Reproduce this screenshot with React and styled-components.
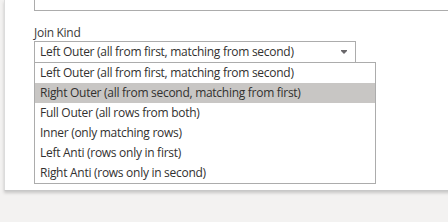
import styled, { createGlobalStyle } from 'styled-components';

const GlobalStyle = createGlobalStyle`
  html, body {
    margin: 0;
    padding: 0;
    background: #f3f2f1;
    width: 448px;
    height: 222px;
    overflow: hidden;
  }
  body {
    font-family: "Open Sans", "Noto Sans", sans-serif;
    color: #323130;
  }
`;

const Page = styled.div`
  width: 448px;
  height: 222px;
  padding-left: 4px;
  box-sizing: border-box;
  overflow: hidden;
`;

const Dialog = styled.div`
  position: relative;
  width: 470px;
  height: 191px;
  box-sizing: border-box;
  background: #ffffff;
  border-left: 1px solid #dcdcdc;
  border-bottom: 1px solid #c8c8c8;
  box-shadow: 0 2px 3px rgba(0, 0, 0, 0.18);
  padding: 0 0 0 29px;
`;

const TopField = styled.div`
  height: 11px;
  box-sizing: border-box;
  border: 1px solid #acacac;
  border-top: none;
  border-right: none;
  margin-right: -10px;
`;

const Label = styled.div`
  margin-top: 14px;
  height: 16px;
  font-size: 12px;
  line-height: 16px;
  letter-spacing: -0.28px;
  color: #3b3a39;
`;

const Field = styled.div`
  position: relative;
  width: 322px;
`;

const Select = styled.div`
  display: flex;
  align-items: center;
  justify-content: space-between;
  height: 22px;
  box-sizing: border-box;
  border: 1px solid #acacac;
  padding: 0 8px 0 5px;
  font-size: 12px;
  line-height: 20px;
  letter-spacing: -0.28px;
  color: #323130;
`;

const Caret = styled.svg`
  width: 6px;
  height: 4px;
  fill: #69676a;
`;

const List = styled.ul`
  position: absolute;
  top: 21px;
  left: 0;
  width: 342px;
  margin: 0;
  padding: 0;
  list-style: none;
  box-sizing: border-box;
  border: 1px solid #acacac;
  background: #ffffff;
`;

const Option = styled.li`
  height: 20px;
  line-height: 20px;
  padding-left: 5px;
  font-size: 12px;
  letter-spacing: -0.28px;
  color: #323130;
  background: ${({ $active }) => ($active ? '#c8c6c4' : 'transparent')};
  white-space: nowrap;
`;

const options = [
  'Left Outer (all from first, matching from second)',
  'Right Outer (all from second, matching from first)',
  'Full Outer (all rows from both)',
  'Inner (only matching rows)',
  'Left Anti (rows only in first)',
  'Right Anti (rows only in second)',
];

export default function App() {
  return (
    <>
      <GlobalStyle />
      <Page>
        <Dialog>
          <TopField />
          <Label>Join Kind</Label>
          <Field>
            <Select>
              <span>{options[0]}</span>
              <Caret viewBox="0 0 6 4">
                <path d="M0 0h6v1L3 4 0 1z" />
              </Caret>
            </Select>
            <List>
              {options.map((o, i) => (
                <Option key={o} $active={i === 1}>
                  {o}
                </Option>
              ))}
            </List>
          </Field>
        </Dialog>
      </Page>
    </>
  );
}
